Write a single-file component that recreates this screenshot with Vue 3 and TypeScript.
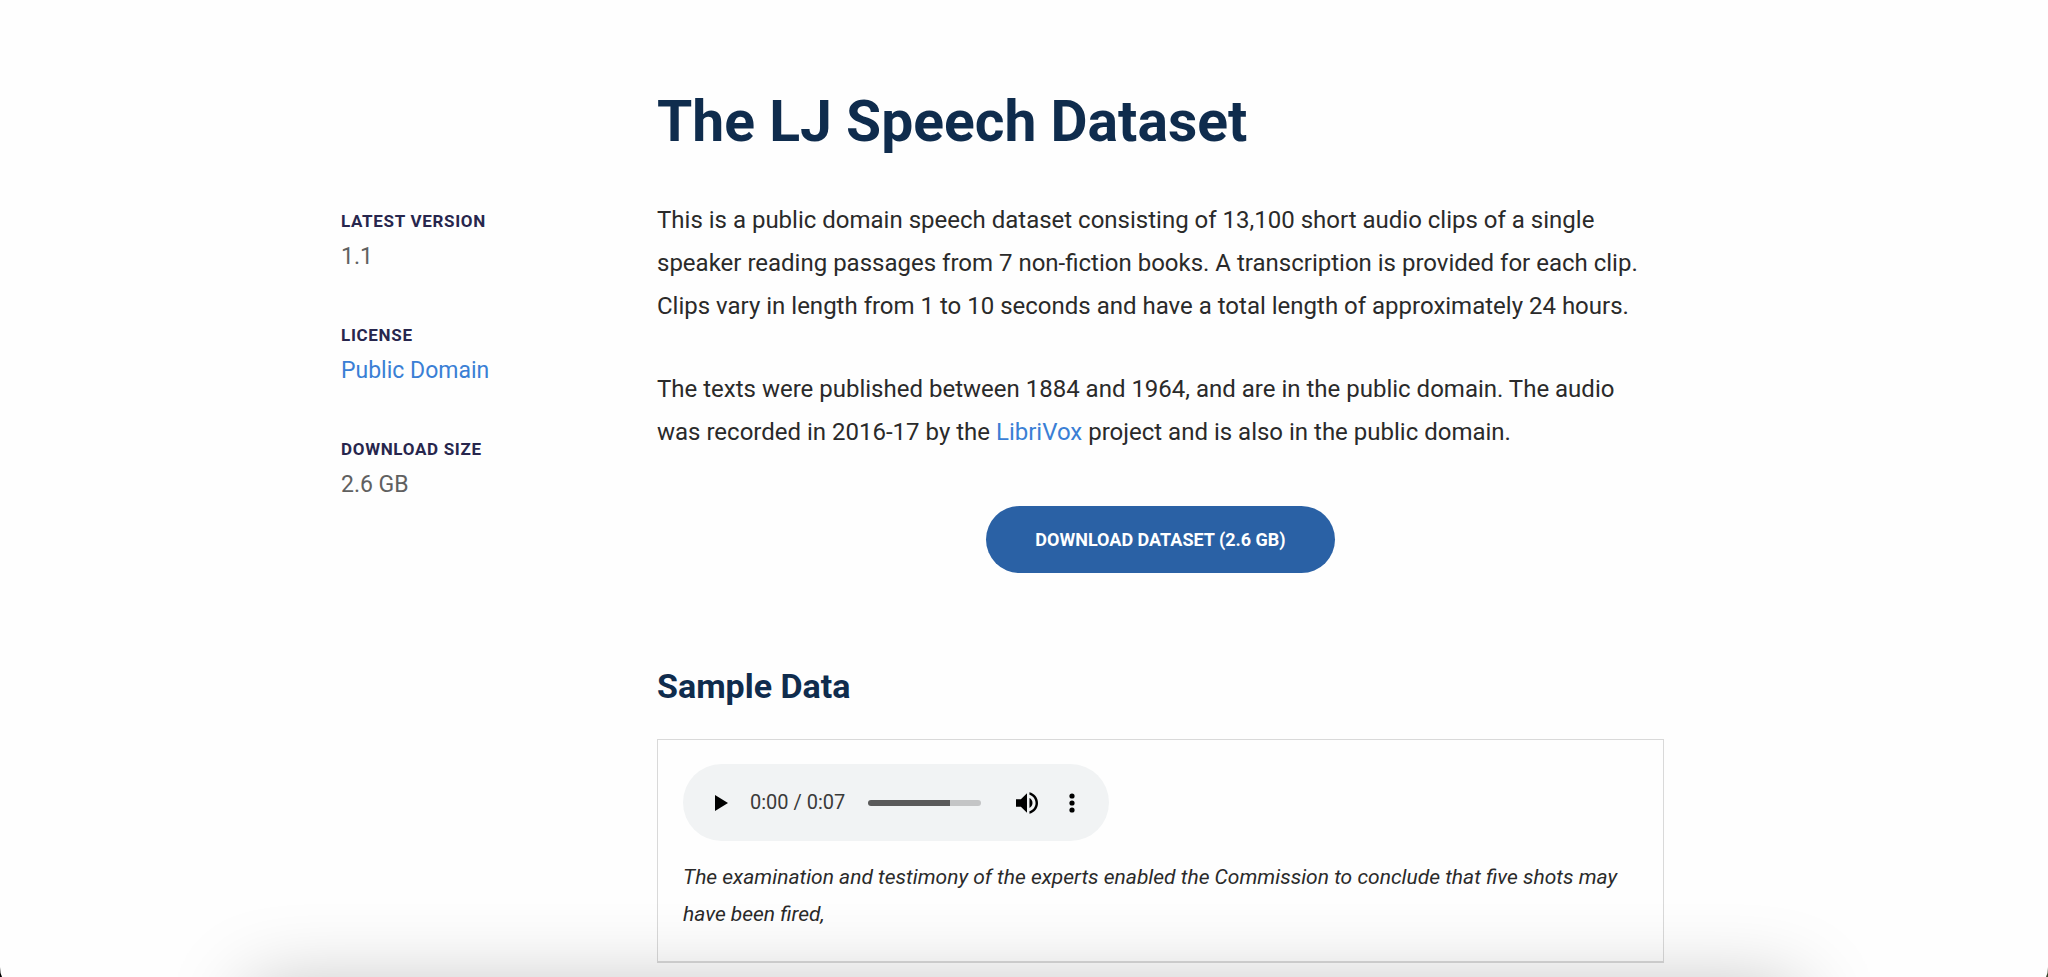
<script setup lang="ts">
import { computed, ref } from 'vue'

interface Fact {
  label: string
  value: string
  href?: string
}

const facts: Fact[] = [
  { label: 'Latest Version', value: '1.1' },
  { label: 'License', value: 'Public Domain', href: '#license' },
  { label: 'Download Size', value: '2.6 GB' },
]

const position = ref(73)
const track = computed(() => ({ '--played': `${position.value}%` }))
</script>

<template>
  <div class="page">
    <aside class="facts">
      <dl>
        <div v-for="fact in facts" :key="fact.label" class="fact">
          <dt>{{ fact.label }}</dt>
          <dd>
            <a v-if="fact.href" :href="fact.href">{{ fact.value }}</a>
            <template v-else>{{ fact.value }}</template>
          </dd>
        </div>
      </dl>
    </aside>

    <main class="content">
      <h1>The LJ Speech Dataset</h1>
      <p>
        This is a public domain speech dataset consisting of 13,100 short audio clips of a single
        speaker reading passages from 7 non-fiction books. A transcription is provided for each clip.
        Clips vary in length from 1 to 10 seconds and have a total length of approximately 24 hours.
      </p>
      <p>
        The texts were published between 1884 and 1964, and are in the public domain. The audio
        was recorded in 2016-17 by the <a href="#librivox">LibriVox</a> project and is also in the public domain.
      </p>
      <div class="action">
        <a class="download" href="#download">Download Dataset (2.6 GB)</a>
      </div>

      <h2>Sample Data</h2>
      <section class="sample">
        <div class="player">
          <button type="button" class="play" aria-label="Play">
            <svg width="14" height="18" viewBox="0 0 14 18"><path d="M0 1v16l13-8z" /></svg>
          </button>
          <span class="time">0:00 / 0:07</span>
          <input v-model="position" class="seek" type="range" min="0" max="100" aria-label="Position" :style="track" />
          <button type="button" class="volume" aria-label="Mute">
            <svg width="22" height="22" viewBox="3 3 18 18">
              <path d="M3 9v6h4l5 5V4L7 9H3zm13.5 3c0-1.77-1.02-3.29-2.5-4.03v8.05c1.48-.73 2.5-2.25 2.5-4.02zM14 3.23v2.06c2.89.86 5 3.54 5 6.71s-2.11 5.85-5 6.71v2.06c4.01-.91 7-4.49 7-8.77s-2.99-7.86-7-8.77z" />
            </svg>
          </button>
          <button type="button" class="more" aria-label="More options">
            <svg width="6" height="20" viewBox="0 0 6 20">
              <circle cx="3" cy="3" r="2.6" /><circle cx="3" cy="10" r="2.6" /><circle cx="3" cy="17" r="2.6" />
            </svg>
          </button>
        </div>
        <p class="transcript">
          The examination and testimony of the experts enabled the Commission to conclude that five shots may
          have been fired,
        </p>
      </section>
    </main>

    <div class="shade" aria-hidden="true"></div>
    <svg class="corner corner-left" width="2" height="10" viewBox="0 0 2 10" aria-hidden="true"><path d="M0 0Q0 6 2 10H0z" /></svg>
    <svg class="corner corner-right" width="2" height="10" viewBox="0 0 2 10" aria-hidden="true"><path d="M2 0Q2 6 0 10H2z" /></svg>
  </div>
</template>

<style>
body {
  margin: 0;
  background: #fefefe;
}
</style>

<style scoped>
.page {
  box-sizing: border-box;
  display: grid;
  grid-template-columns: 316px minmax(0, 1fr);
  width: 100%;
  max-width: 1366px;
  margin: 0 auto;
  padding: 87px 43px 14px 0;
  font-family: Roboto, "Liberation Sans", sans-serif;
  font-size: 24px;
  line-height: 43px;
  color: #2a2a2a;
}

a {
  color: #3a7fd5;
  text-decoration: none;
}

.facts {
  padding-top: 119px;
}

dl,
dd {
  margin: 0;
}

.fact {
  margin-bottom: 42px;
}

dt {
  font-size: 17px;
  line-height: 30px;
  font-weight: 700;
  letter-spacing: 0.04em;
  text-transform: uppercase;
  color: #27264d;
}

dd {
  font-size: 23px;
  line-height: 42px;
  color: #606060;
}

h1 {
  margin: 0 0 42px;
  font-size: 57px;
  line-height: 70px;
  font-weight: 700;
  color: #0f2c4d;
}

p {
  max-width: 1000px;
  margin: 0 0 40px;
}

.action {
  display: flex;
  justify-content: center;
  margin-top: 52px;
}

.download {
  padding: 12px 49px;
  border-radius: 34px;
  background: #2a61a5;
  font-size: 18px;
  font-weight: 700;
  text-transform: uppercase;
  color: #fff;
}

h2 {
  margin: 92px 0 32px;
  font-size: 34px;
  line-height: 42px;
  font-weight: 700;
  color: #0f2c4d;
}

.sample {
  padding: 24px 25px 28px;
  border: 1px solid #d9d9d9;
  border-bottom-width: 2px;
}

.player {
  box-sizing: border-box;
  display: flex;
  align-items: center;
  width: 426px;
  max-width: 100%;
  height: 77px;
  padding: 0 34px 0 32px;
  border-radius: 39px;
  background: #f1f3f4;
}

.player button {
  display: flex;
  padding: 0;
  border: 0;
  background: none;
  cursor: pointer;
}

.time {
  margin-left: 21px;
  font-size: 20px;
  color: #3a3a3a;
  white-space: nowrap;
}

.seek {
  appearance: none;
  flex: 1;
  min-width: 0;
  height: 6px;
  margin: 0 35px 0 23px;
  border-radius: 3px;
  background:
    linear-gradient(#5a5a5a, #5a5a5a) 0 0 / var(--played) 100% no-repeat,
    #c4c5c6;
}

.seek::-webkit-slider-thumb {
  appearance: none;
  width: 0;
  height: 6px;
}

.player .more {
  margin-left: 31px;
}

.transcript {
  margin: 18px 0 0;
  font-size: 21px;
  line-height: 37px;
  font-style: italic;
}

.shade {
  position: fixed;
  top: calc(100% + 10px);
  left: 250px;
  right: 250px;
  height: 200px;
  box-shadow: 0 0 80px rgba(0, 0, 0, 0.25);
  pointer-events: none;
}

.corner {
  position: fixed;
  bottom: 0;
}

.corner-left {
  left: 0;
}

.corner-right {
  right: 0;
  fill: #3c4a2c;
}
</style>
